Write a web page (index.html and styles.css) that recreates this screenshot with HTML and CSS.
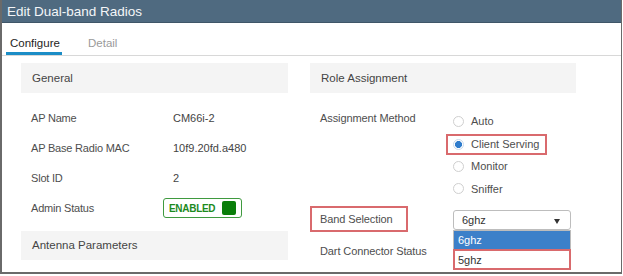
FILE: index.html
```html
<!DOCTYPE html>
<html>
<head>
<meta charset="utf-8">
<link rel="stylesheet" href="styles.css">
</head>
<body>
<div class="dialog">
  <div class="titlebar">Edit Dual-band Radios</div>
  <div class="tabs">
    <div class="tab active">Configure</div>
    <div class="tab">Detail</div>
  </div>
  <div class="content">
    <div class="col left">
      <div class="section-head">General</div>
      <div class="rows">
        <div class="row"><div class="label">AP Name</div><div class="value">CM66i-2</div></div>
        <div class="row"><div class="label">AP Base Radio MAC</div><div class="value">10f9.20fd.a480</div></div>
        <div class="row"><div class="label">Slot ID</div><div class="value">2</div></div>
        <div class="row"><div class="label">Admin Status</div><div class="value toggle-cell"><div class="toggle"><span class="toggle-text">ENABLED</span><span class="toggle-knob"></span></div></div></div>
      </div>
      <div class="section-head second">Antenna Parameters</div>
    </div>
    <div class="col right">
      <div class="section-head">Role Assignment</div>
      <div class="rgrid">
        <div class="rlabel method">Assignment Method</div>
        <div class="radios">
          <div class="radio"><span class="circle"></span><span>Auto</span></div>
          <div class="radio hl"><span class="circle checked"></span><span>Client Serving</span></div>
          <div class="radio"><span class="circle"></span><span>Monitor</span></div>
          <div class="radio"><span class="circle"></span><span>Sniffer</span></div>
        </div>
        <div class="rlabel band"><span class="band-box">Band Selection</span></div>
        <div class="select-cell">
          <div class="select"><span>6ghz</span><span class="caret"></span></div>
          <div class="menu">
            <div class="opt selected">6ghz</div>
            <div class="opt marked">5ghz</div>
          </div>
        </div>
        <div class="rlabel dart">Dart Connector Status</div>
        <div></div>
      </div>
    </div>
  </div>
</div>
</body>
</html>
```
FILE: styles.css
```css
html, body {
  margin: 0;
  padding: 0;
  background: #ffffff;
}
body {
  font-family: "Liberation Sans", Arial, sans-serif;
  color: #4a4a4a;
  width: 623px;
  height: 276px;
  overflow: hidden;
}
.dialog {
  box-sizing: border-box;
  width: 622px;
  height: 274px;
  border: 1px solid #6a6a6a;
  border-top: none;
  border-left-width: 2px;
  border-bottom-width: 2px;
  background: #fff;
  overflow: hidden;
}
.titlebar {
  height: 23px;
  background: #4f6a80;
  color: #f4f6f8;
  font-size: 13.5px;
  line-height: 24px;
  padding-left: 5px;
  border-bottom: 1px solid #3f5668;
  box-sizing: border-box;
}
.tabs {
  display: flex;
  height: 33px;
  box-sizing: border-box;
  border-bottom: 1px solid #d8d8d8;
  padding-left: 4px;
  gap: 22px;
}
.tab {
  font-size: 11.5px;
  color: #9a9a9a;
  padding: 14px 4px 0;
  box-sizing: border-box;
  height: 32px;
}
.tab.active {
  color: #1e1e1e;
  border-bottom: 3px solid #1b8dc6;
  width: 56px;
  padding-left: 4px;
}
.content {
  display: flex;
  gap: 22px;
  padding: 7px 0 0 19px;
}
.col.left { width: 267px; }
.col.right { width: 266px; }
.section-head {
  height: 30px;
  background: #f4f4f4;
  font-size: 11.5px;
  color: #454545;
  line-height: 30px;
  padding-left: 11px;
}
.section-head.second { margin-top: 8px; height: 29px; line-height: 29px; }
.rows { padding-top: 10px; }
.row {
  display: flex;
  height: 30px;
  align-items: center;
  font-size: 11px;
}
.label { width: 142px; padding-left: 10px; color: #4e4e4e; letter-spacing: -0.2px; }
.value { color: #444; }
.toggle-cell { margin-left: -10px; }
.toggle {
  width: 79px;
  height: 20px;
  box-sizing: border-box;
  border: 1px solid #3f9a3f;
  border-radius: 3px;
  display: flex;
  align-items: center;
  justify-content: space-between;
  padding: 0 5px 0 5px;
}
.toggle-text {
  color: #1d8a1d;
  font-size: 10px;
  font-weight: bold;
  letter-spacing: -0.3px;
}
.toggle-knob {
  width: 14px;
  height: 14px;
  background: #0a7e0a;
  border-radius: 2px;
}
.rgrid {
  display: grid;
  grid-template-columns: 143px 1fr;
  font-size: 11px;
  padding-top: 17px;
}
.rlabel { padding-left: 10px; color: #4e4e4e; letter-spacing: -0.1px; }
.method { padding-top: 2px; }
.radios { display: flex; flex-direction: column; }
.radio {
  display: flex;
  align-items: center;
  height: 22.5px;
  box-sizing: border-box;
  gap: 7px;
  color: #4e4e4e;
}
.radio.hl {
  margin-left: -7px;
  padding-left: 5px;
  width: 101px;
  border: 2px solid #d96a6d;
  height: 21px;
  margin-top: 1px;
  margin-bottom: 0.5px;
}
.circle {
  width: 11px;
  height: 11px;
  box-sizing: border-box;
  border: 1px solid #cfcfcf;
  border-radius: 50%;
  background: #fff;
  flex: none;
}
.circle.checked {
  border-color: #c9d9ea;
  background: radial-gradient(circle, #2f7ccc 0 3.2px, #ffffff 3.8px);
}
.band {
  padding-left: 0;
  padding-top: 6px;
}
.band-box {
  display: flex;
  align-items: center;
  width: 98px;
  height: 26px;
  box-sizing: border-box;
  border: 2px solid #d96a6d;
  padding-left: 8px;
}
.select-cell {
  position: relative;
  padding-top: 10px;
}
.select {
  width: 118px;
  height: 20px;
  box-sizing: border-box;
  border: 1px solid #bdbdbd;
  border-radius: 3px;
  display: flex;
  align-items: center;
  justify-content: space-between;
  padding: 0 10px 0 8px;
  color: #333;
}
.caret {
  width: 0;
  height: 0;
  border-left: 3.5px solid transparent;
  border-right: 3.5px solid transparent;
  border-top: 5px solid #333;
  margin-top: 2px;
}
.menu {
  position: absolute;
  left: 0;
  top: 30px;
  width: 118px;
  background: #fff;
}
.opt {
  height: 19px;
  line-height: 19px;
  padding-left: 4px;
  color: #333;
  box-sizing: border-box;
}
.opt.selected {
  background: #3c80c9;
  color: #fff;
  border: 1px solid #bcbcbc;
  border-bottom: none;
}
.opt.marked {
  height: 21px;
  line-height: 18px;
  border: 2px solid #d96a6d;
  padding-left: 3px;
}
.dart { padding-top: 13px; }
```
